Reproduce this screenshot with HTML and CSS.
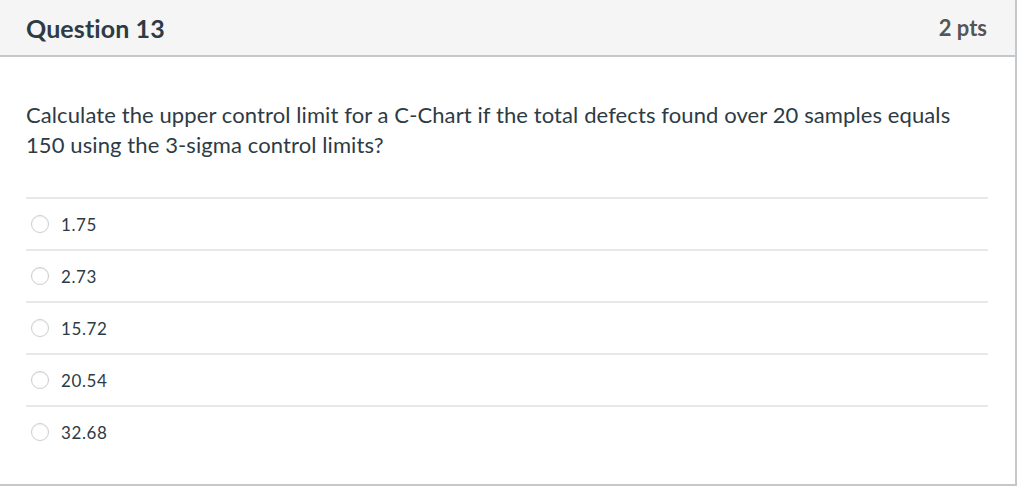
FILE: index.html
```html
<!DOCTYPE html>
<html>
<head>
<meta charset="utf-8">
<link rel="stylesheet" href="styles.css">
</head>
<body>
<div class="card">
  <div class="header">
    <div class="title">Question 13</div>
    <div class="pts">2 pts</div>
  </div>
  <div class="content">
    <p class="question">Calculate the upper control limit for a C-Chart if the total defects found over 20 samples equals 150 using the 3-sigma control limits?</p>
    <div class="answers">
      <div class="answer"><span class="radio"></span><span class="label">1.75</span></div>
      <div class="answer"><span class="radio"></span><span class="label">2.73</span></div>
      <div class="answer"><span class="radio"></span><span class="label">15.72</span></div>
      <div class="answer"><span class="radio"></span><span class="label">20.54</span></div>
      <div class="answer"><span class="radio"></span><span class="label">32.68</span></div>
    </div>
  </div>
</div>
</body>
</html>
```

FILE: styles.css
```css
html, body {
  margin: 0;
  padding: 0;
  background: #ffffff;
  font-family: Lato, "Open Sans", sans-serif;
}
.card {
  width: 1015px;
  border-right: 2px solid #c4c8cb;
  border-bottom: 2px solid #c4c8cb;
  background: #fff;
}
.header {
  height: 55px;
  background: #f5f5f5;
  border-bottom: 2px solid #c4c8cb;
  display: flex;
  align-items: center;
  justify-content: space-between;
  padding: 0 28px 0 26px;
}
.title {
  font-weight: 700;
  font-size: 25px;
  letter-spacing: 0.1px;
  color: #2d3b45;
}
.pts {
  font-weight: 700;
  font-size: 22px;
  color: #555555;
}
.content {
  padding: 0 27px 27px 26px;
}
.question {
  margin: 0;
  padding: 43px 6px 37px 0;
  font-size: 22px;
  letter-spacing: 0.1px;
  line-height: 30px;
  color: #2d3b45;
}
.answers {
  display: flex;
  flex-direction: column;
}
.answer {
  height: 50px;
  border-top: 2px solid #e6e8ea;
  display: flex;
  align-items: center;
  padding-left: 5px;
}
.radio {
  width: 16px;
  height: 16px;
  border-radius: 50%;
  border: 1px solid #c9cdd0;
  box-shadow: inset 0 1px 1px rgba(0,0,0,0.06);
  margin-right: 12px;
  background: #fff;
}
.label {
  font-size: 17px;
  letter-spacing: 0.6px;
  color: #2d3b45;
}
```
